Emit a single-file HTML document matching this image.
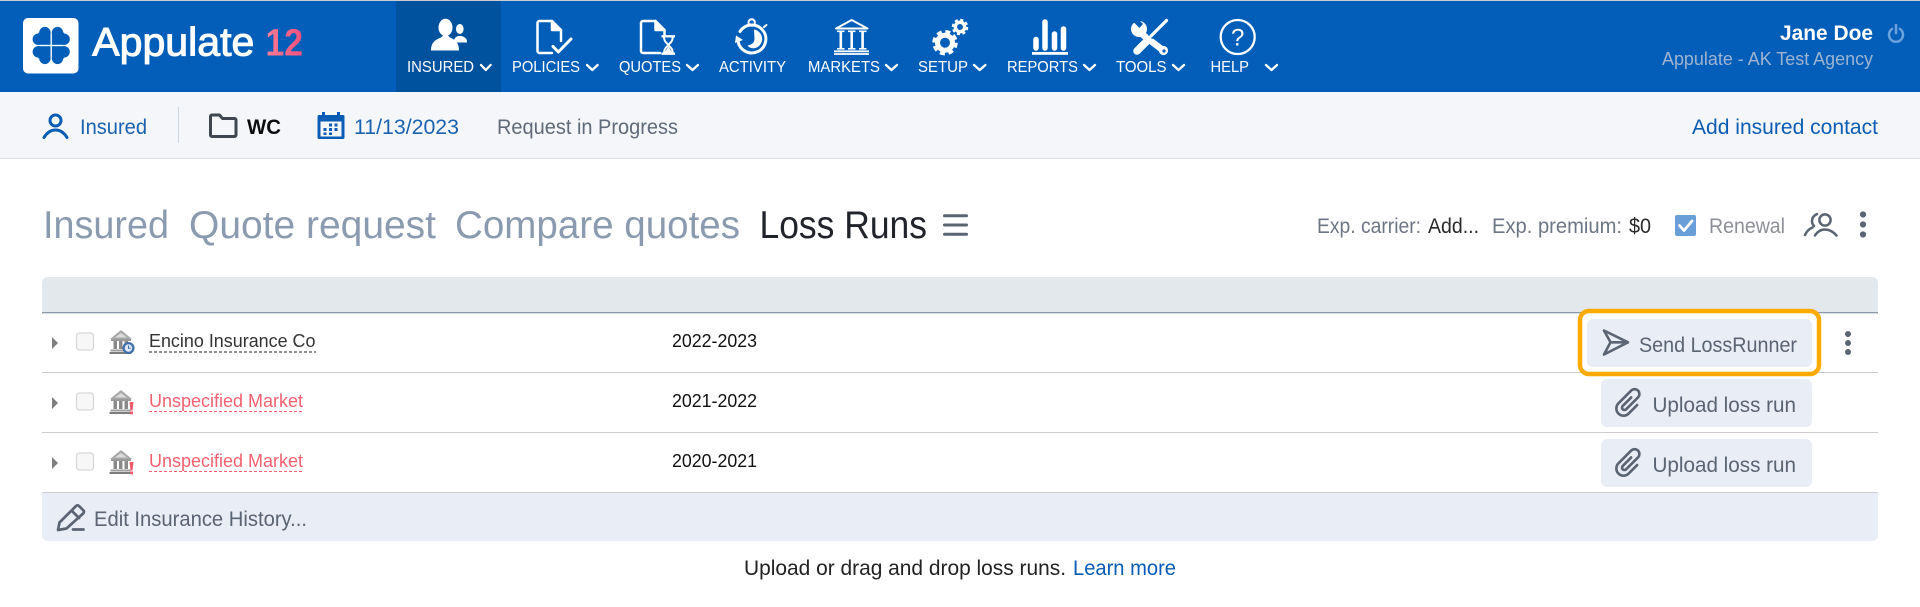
<!DOCTYPE html>
<html lang="en"><head><meta charset="utf-8"><title>Appulate Loss Runs</title>
<style>
html,body{margin:0;padding:0;background:#fff;width:1920px;height:607px;overflow:hidden}
svg{display:block}
text{font-family:"Liberation Sans",sans-serif;white-space:pre}
.nav{font-size:15.5px;fill:#fff}
.b{font-size:21px}
.t{font-size:38.5px;fill:#8a9bb0}
.r{font-size:18px}
.w{fill:#fff}
.sw{fill:none;stroke:#fff}
.ch{fill:none;stroke:#fff;stroke-width:2.3;stroke-linecap:round;stroke-linejoin:round}
.g{fill:none;stroke:#5a6473;stroke-linecap:round;stroke-linejoin:round}
</style></head><body>
<svg width="1920" height="607" viewBox="0 0 1920 607" xmlns="http://www.w3.org/2000/svg">
<defs>
<linearGradient id="pk" x1="0" x2="1" y1="0" y2="0"><stop offset="0" stop-color="#fb7d93"/><stop offset="1" stop-color="#f0507f"/></linearGradient>
<linearGradient id="bk" x1="0" x2="0" y1="0" y2="1"><stop offset="0" stop-color="#b5b5b5"/><stop offset="1" stop-color="#777"/></linearGradient>
<g id="leaf"><circle cx="6.3" cy="-12.9" r="5.7"/><circle cx="12.9" cy="-6.3" r="5.7"/><polygon points=".7,-.7 .7,-12.9 12.9,-12.9 12.9,-.7"/></g>
<g id="bank">
<polygon points="12,0 23,9 1,9" fill="#a9a9a9"/>
<polygon points="12,3 18,7.500 6,7.500" fill="#dcdcdc"/>
<rect x="2" y="9" width="20" height="2" fill="#9a9a9a"/>
<rect x="4.5" y="11" width="3.5" height="8" fill="#8a8a8a"/><rect x="10" y="11" width="3.5" height="8" fill="#8a8a8a"/><rect x="15.5" y="11" width="3.5" height="8" fill="#8a8a8a"/>
<rect x="1.5" y="19.5" width="20" height="2" fill="#9f9f9f"/><rect x="0.5" y="22" width="22" height="2" fill="#7d7d7d"/>
</g>
<g id="clip"><path transform="translate(1629.500 402.500) rotate(45) scale(1.2)" fill="none" stroke="#5a6473" stroke-width="2.200" stroke-linecap="round" stroke-linejoin="round" d="M6-3V7a6 6 0 0 1-12 0V-8a4 4 0 0 1 8 0V6a2 2 0 0 1-4 0V-4"/></g>
</defs>

<!-- header -->
<rect width="1920" height="1" fill="#c9cdd2"/>
<rect y="1" width="1920" height="91" fill="#025eb9"/>
<rect x="396" y="1" width="105" height="92" fill="#00519e"/>

<!-- logo -->
<rect x="23" y="18" width="55.5" height="55.5" rx="5" fill="#fff"/>
<g fill="#025eb9" transform="translate(51.2 45.5)">
<use href="#leaf"/><use href="#leaf" transform="rotate(90)"/><use href="#leaf" transform="rotate(180)"/><use href="#leaf" transform="rotate(270)"/>
</g>
<text x="92.3" y="55.5" font-size="40" textLength="162" lengthAdjust="spacingAndGlyphs" fill="#fff" stroke="#fff" stroke-width="1">Appulate</text>
<text x="265.5" y="55.5" font-size="38" font-weight="bold" textLength="37.5" lengthAdjust="spacingAndGlyphs" fill="url(#pk)">12</text>

<!-- nav icons -->
<g class="w">
<ellipse cx="445.5" cy="27.5" rx="7" ry="8.7"/>
<path d="M431 50.5c0-7 3-10.500 10-13l2-2h5l2 2c6 2.500 9 6 9 13z"/>
<ellipse cx="459.800" cy="29" rx="4.300" ry="5.500" stroke="#00519e" stroke-width="1"/>
<path d="M454 41c0-3 2-4 4-5h3.500c3 1 5.500 2.500 5.500 5.500v1h-10z"/>
</g>
<g class="sw" stroke-width="2.500" stroke-linecap="round" stroke-linejoin="round">
<path d="M552 21H539.500a2 2 0 0 0-2 2V51a2 2 0 0 0 2 2H552M561 30V41"/>
<path d="M552 21l9 9h-9z" fill="#fff"/>
<path d="M553 46.500l5.300 5.500L571 39" stroke-width="3"/>
<path d="M655.500 21H643a2 2 0 0 0-2 2V51a2 2 0 0 0 2 2H660M664.500 30V35"/>
<path d="M655.500 21l9 9h-9z" fill="#fff"/>
</g>
<g class="sw" stroke-width="2.300"><path d="M661.500 36.300h13.500M661.500 53.700h13.500"/><path stroke-width="2" d="M664 37c0 5 3 6 4.300 8c-1.300 2-4.300 3-4.300 8M672.700 37c0 5-3 6-4.400 8c1.300 2 4.400 3 4.400 8"/></g>
<polygon points="664.500,52.500 668.300,46.500 672.200,52.500" fill="#fff"/>
<g class="sw" stroke-width="3" stroke-linecap="round">
<path d="M740 31.500A14 14 0 1 1 738 41"/>
<circle cx="751.700" cy="22.500" r="3.200" stroke-width="2"/>
<path d="M764 27l2.500-2" stroke-width="2"/>
</g>
<polygon points="736,35.500 743,40 735,43" fill="#fff"/>
<path class="w" d="M754 29.500a9.500 9.500 0 0 1 0 18.800c-3 0-5.500-1-6.500-2.800c5-1 7-3 7-7z"/>
<g class="sw" stroke-width="2"><path d="M851.700 20L836 28.500h31.500z" stroke-linejoin="round"/>
<path d="M834 51.300h35M834 54h35" stroke-width="1.800"/></g>
<g class="w">
<rect x="839.500" y="31" width="2.600" height="18.500"/><rect x="850.400" y="31" width="2.600" height="18.500"/><rect x="861.300" y="31" width="2.600" height="18.500"/>
<rect x="837" y="30.500" width="7.500" height="1.600"/><rect x="848" y="30.500" width="7.500" height="1.600"/><rect x="859" y="30.500" width="7.500" height="1.600"/>
<rect x="837" y="48" width="7.500" height="1.600"/><rect x="848" y="48" width="7.500" height="1.600"/><rect x="859" y="48" width="7.500" height="1.600"/>
</g>
<g fill="none" stroke="#fff">
<circle cx="945" cy="42.700" r="7.500" stroke-width="5"/>
<circle cx="945" cy="42.700" r="11" stroke-width="3.500" stroke-dasharray="5 3.640"/>
<circle cx="960" cy="27" r="4.700" stroke-width="3.500"/>
<circle cx="960" cy="27" r="7" stroke-width="2.500" stroke-dasharray="3 2.500"/>
</g>
<g fill="none" stroke="#fff" stroke-linecap="round" stroke-width="5.500">
<path d="M1036 39.500V48M1045 22V48M1054.500 34V48M1063.500 29V48"/>
</g>
<rect x="1032" y="52" width="36" height="2.800" fill="#fff"/>
<!-- tools -->
<g fill="none" stroke="#fff" stroke-linecap="round">
<path d="M1143 35L1162 49.500" stroke-width="6.500"/>
<circle cx="1139" cy="29" r="8" fill="#fff" stroke="none"/>
<circle cx="1163.500" cy="50.500" r="4.600" fill="#fff" stroke="none"/>
</g>
<circle cx="1164" cy="51" r="1.600" fill="#025eb9"/>
<polygon points="1133,17 1141,25 1137.500,29 1129.500,21" fill="#025eb9" transform="translate(2 -1)"/>
<path d="M1163 23.500L1150 37" stroke="#025eb9" stroke-width="6" fill="none"/>
<path d="M1166.500 20.500L1151 36" stroke="#fff" stroke-width="3.200" stroke-linecap="round" fill="none"/>
<path d="M1147.500 40.500L1137 51" stroke="#fff" stroke-width="7.500" stroke-linecap="round" fill="none"/>
<circle cx="1237.700" cy="37" r="17" fill="none" stroke="#fff" stroke-width="2.300"/>
<text x="1231" y="45.500" font-size="24" fill="#fff">?</text>

<!-- nav labels -->
<g class="nav">
<text x="407" y="72" textLength="67" lengthAdjust="spacingAndGlyphs">INSURED</text>
<text x="512" y="72" textLength="68" lengthAdjust="spacingAndGlyphs">POLICIES</text>
<text x="619" y="72" textLength="62" lengthAdjust="spacingAndGlyphs">QUOTES</text>
<text x="719" y="72" textLength="67" lengthAdjust="spacingAndGlyphs">ACTIVITY</text>
<text x="808" y="72" textLength="72" lengthAdjust="spacingAndGlyphs">MARKETS</text>
<text x="918" y="72" textLength="50" lengthAdjust="spacingAndGlyphs">SETUP</text>
<text x="1007" y="72" textLength="71" lengthAdjust="spacingAndGlyphs">REPORTS</text>
<text x="1116" y="72" textLength="50.500" lengthAdjust="spacingAndGlyphs">TOOLS</text>
<text x="1210.500" y="72" textLength="38.500" lengthAdjust="spacingAndGlyphs">HELP</text>
</g>
<g class="ch">
<path d="M481 65l4.800 5 4.800-5M587 65l5.300 5 5.300-5M687 65l5.500 5 5.500-5M886 65l5.500 5 5.500-5M974 65l5.700 5 5.700-5M1084 65l5.500 5 5.500-5M1173 65l5.500 5 5.500-5M1266 65l5.500 5 5.500-5"/>
</g>

<!-- user -->
<text x="1780" y="40" font-size="21" font-weight="bold" fill="#fff" textLength="93" lengthAdjust="spacingAndGlyphs">Jane Doe</text>
<text x="1662" y="65" font-size="18" fill="#9db4d0" textLength="211" lengthAdjust="spacingAndGlyphs">Appulate - AK Test Agency</text>
<g fill="none" stroke="#6da3dc" stroke-width="2.500" stroke-linecap="round"><path d="M1892 29a7 7 0 1 0 8 0M1896 25v8"/></g>

<!-- sub bar -->
<rect y="92" width="1920" height="66" fill="#f5f6fa"/>
<rect y="158" width="1920" height="1" fill="#dfe3ea"/>
<g fill="none" stroke="#0a5cb4" stroke-width="3" stroke-linecap="round">
<circle cx="55.500" cy="120.500" r="5.500"/>
<path d="M44 137.500c3-5 6.500-7.500 11.500-7.500s8.500 2.500 11.500 7.500"/>
</g>
<text class="b" x="80" y="134" fill="#1a62b0" textLength="67" lengthAdjust="spacingAndGlyphs">Insured</text>
<rect x="178" y="107" width="1" height="36" fill="#cdd7e3"/>
<path d="M210.500 135V116.500a1.500 1.500 0 0 1 1.500-1.500h7.500l3 3.500h12a1.500 1.500 0 0 1 1.500 1.500v15a1.500 1.500 0 0 1-1.500 1.500H212a1.500 1.500 0 0 1-1.500-1.500z" fill="none" stroke="#3f4650" stroke-width="3" stroke-linejoin="round"/>
<text class="b" x="247" y="134" font-weight="bold" fill="#0c0c0c" textLength="34" lengthAdjust="spacingAndGlyphs">WC</text>
<g fill="#0a5cb4">
<path fill-rule="evenodd" d="M319 115h24a1.500 1.500 0 0 1 1.500 1.500v21a1.500 1.500 0 0 1-1.500 1.500h-24a1.500 1.500 0 0 1-1.500-1.500v-21a1.500 1.500 0 0 1 1.500-1.500zM320.500 121.500v15h21v-15z"/>
<rect x="322" y="112" width="3" height="6"/><rect x="337" y="112" width="3" height="6"/>
<rect x="329" y="123.500" width="3" height="3"/><rect x="334.500" y="123.500" width="3" height="3"/>
<rect x="323.500" y="128" width="3" height="3"/><rect x="329" y="128" width="3" height="3"/><rect x="334.500" y="128" width="3" height="3"/>
<rect x="323.500" y="132.500" width="3" height="2.500"/><rect x="329" y="132.500" width="3" height="2.500"/>
</g>
<text class="b" x="354" y="134" fill="#1a62b0" textLength="105" lengthAdjust="spacingAndGlyphs">11/13/2023</text>
<text class="b" x="497" y="134" fill="#606a78" textLength="181" lengthAdjust="spacingAndGlyphs">Request in Progress</text>
<text class="b" x="1692" y="134" fill="#0a5cb4" textLength="186" lengthAdjust="spacingAndGlyphs">Add insured contact</text>

<!-- titles -->
<text class="t" x="43" y="238" textLength="126" lengthAdjust="spacingAndGlyphs">Insured</text>
<text class="t" x="189" y="238" textLength="247" lengthAdjust="spacingAndGlyphs">Quote request</text>
<text class="t" x="455" y="238" textLength="285" lengthAdjust="spacingAndGlyphs">Compare quotes</text>
<text class="t" x="759.500" y="238" style="fill:#20242a" textLength="167.500" lengthAdjust="spacingAndGlyphs">Loss Runs</text>
<g class="g" stroke-width="3"><path d="M944.500 215.700h22M944.500 225h22M944.500 234.300h22"/></g>

<g class="b">
<text x="1317" y="233" fill="#6d7684" textLength="104" lengthAdjust="spacingAndGlyphs">Exp. carrier:</text>
<text x="1428" y="233" fill="#2a2a2a" textLength="51" lengthAdjust="spacingAndGlyphs">Add...</text>
<text x="1492" y="233" fill="#6d7684" textLength="130" lengthAdjust="spacingAndGlyphs">Exp. premium:</text>
<text x="1629" y="233" fill="#2a2a2a" textLength="22" lengthAdjust="spacingAndGlyphs">$0</text>
<text x="1709" y="233" fill="#8c8f96" textLength="76" lengthAdjust="spacingAndGlyphs">Renewal</text>
</g>
<rect x="1675" y="215" width="21" height="21" rx="2" fill="#6a9ed9"/>
<path d="M1679.500 225.500l4.500 5 8-9.500" fill="none" stroke="#fff" stroke-width="2.800" stroke-linecap="round" stroke-linejoin="round"/>
<g class="g" stroke-width="2.500">
<circle cx="1825" cy="220" r="5.600"/>
<path d="M1815 235.500c2.500-4 6-6 10-6s8 2 11.500 6"/>
<path d="M1817 214c-3 1.500-5 4-5 7c0 2 .5 3.500 2 5M1805 235c1.500-3.500 4-6 7.500-7.500"/>
</g>
<g fill="#5a6473"><circle cx="1863" cy="214.500" r="3.100"/><circle cx="1863" cy="224.500" r="3.100"/><circle cx="1863" cy="234.500" r="3.100"/></g>

<!-- table -->
<path d="M42 312V283a6 6 0 0 1 6-6H1872a6 6 0 0 1 6 6V312z" fill="#e3e8ec"/>
<rect x="42" y="312" width="1836" height="1.300" fill="#8a97a8"/>
<rect x="42" y="313.300" width="1836" height="1.200" fill="#eef0f3"/>
<rect x="42" y="372" width="1836" height="1" fill="#cccccc"/>
<rect x="42" y="432" width="1836" height="1" fill="#cccccc"/>
<rect x="42" y="492" width="1836" height="1" fill="#cccccc"/>
<path d="M42 493H1878V535a6 6 0 0 1-6 6H48a6 6 0 0 1-6-6z" fill="#e9edf5"/>

<!-- rows -->
<g fill="#808080"><polygon points="52,337 58,343 52,349"/><polygon points="52,397 58,403 52,409"/><polygon points="52,457 58,463 52,469"/></g>
<g fill="#f7f7f7" stroke="#d8d8d8" stroke-width="1.300">
<rect x="76.500" y="333" width="17" height="17" rx="3"/><rect x="76.500" y="393" width="17" height="17" rx="3"/><rect x="76.500" y="453" width="17" height="17" rx="3"/>
</g>
<use href="#bank" x="109" y="330"/><use href="#bank" x="109" y="390"/><use href="#bank" x="109" y="450"/>
<circle cx="128.500" cy="348" r="6" fill="#3d6fa8"/><circle cx="128.500" cy="348" r="3.800" fill="#dfe8f2"/><path d="M128.500 345.500v2.800h2.200" fill="none" stroke="#3d6fa8" stroke-width="1"/>
<g fill="#f15a6a"><polygon points="129.500,402 133.500,402 132.500,410.500 130.500,410.500"/><rect x="130" y="411.500" width="3" height="2.800"/><polygon points="129.500,462 133.500,462 132.500,470.500 130.500,470.500"/><rect x="130" y="471.500" width="3" height="2.800"/></g>

<g class="r">
<text x="149" y="347" fill="#333" textLength="166.500" lengthAdjust="spacingAndGlyphs">Encino Insurance Co</text>
<text x="149" y="407" fill="#f2616f" textLength="154" lengthAdjust="spacingAndGlyphs">Unspecified Market</text>
<text x="149" y="467" fill="#f2616f" textLength="154" lengthAdjust="spacingAndGlyphs">Unspecified Market</text>
<text x="672" y="347" fill="#111" textLength="85" lengthAdjust="spacingAndGlyphs">2022-2023</text>
<text x="672" y="407" fill="#111" textLength="85" lengthAdjust="spacingAndGlyphs">2021-2022</text>
<text x="672" y="467" fill="#111" textLength="85" lengthAdjust="spacingAndGlyphs">2020-2021</text>
</g>
<path d="M149 352H316" stroke="#222" stroke-width="1" stroke-dasharray="3 2" fill="none"/>
<path d="M149 411.500H303M149 471.500H303" stroke="#f2616f" stroke-width="1" stroke-dasharray="3 2" fill="none"/>

<!-- buttons -->
<rect x="1580" y="311" width="239" height="63" rx="9" fill="#fff" stroke="#fbab00" stroke-width="4.500"/>
<rect x="1587" y="319" width="225" height="48" rx="6" fill="#e9edf5"/>
<g class="g" stroke-width="2.600"><path d="M1604 330.500l24 11.800-24 12.200 6.500-12.200zM1610.500 342.300h17.500"/></g>
<text class="b" x="1639" y="352" fill="#5a6473" textLength="158" lengthAdjust="spacingAndGlyphs">Send LossRunner</text>
<g fill="#5a6473"><circle cx="1848" cy="334" r="3"/><circle cx="1848" cy="343" r="3"/><circle cx="1848" cy="352" r="3"/></g>

<rect x="1601" y="379" width="211" height="48" rx="6" fill="#e9edf5"/>
<use href="#clip"/>
<text class="b" x="1652.500" y="412" fill="#5a6473" textLength="143.500" lengthAdjust="spacingAndGlyphs">Upload loss run</text>
<rect x="1601" y="439" width="211" height="48" rx="6" fill="#e9edf5"/>
<use href="#clip" y="60"/>
<text class="b" x="1652.500" y="472" fill="#5a6473" textLength="143.500" lengthAdjust="spacingAndGlyphs">Upload loss run</text>

<!-- edit -->
<g class="g" stroke-width="2.700">
<path d="M58 530l1.500-7.500L76 506a2 2 0 0 1 3 0l4.300 4.300a2 2 0 0 1 0 3L66.500 528.500zM71.500 510.500l7.500 7.500"/>
<path d="M73 529.500h10.500"/>
</g>
<text class="b" x="94" y="526" fill="#5a6473" textLength="213" lengthAdjust="spacingAndGlyphs">Edit Insurance History...</text>

<!-- footer -->
<text class="b" x="744" y="575" fill="#222" textLength="322" lengthAdjust="spacingAndGlyphs">Upload or drag and drop loss runs.</text>
<text class="b" x="1073" y="575" fill="#0a5cb4" textLength="103" lengthAdjust="spacingAndGlyphs">Learn more</text>
</svg>
</body></html>
